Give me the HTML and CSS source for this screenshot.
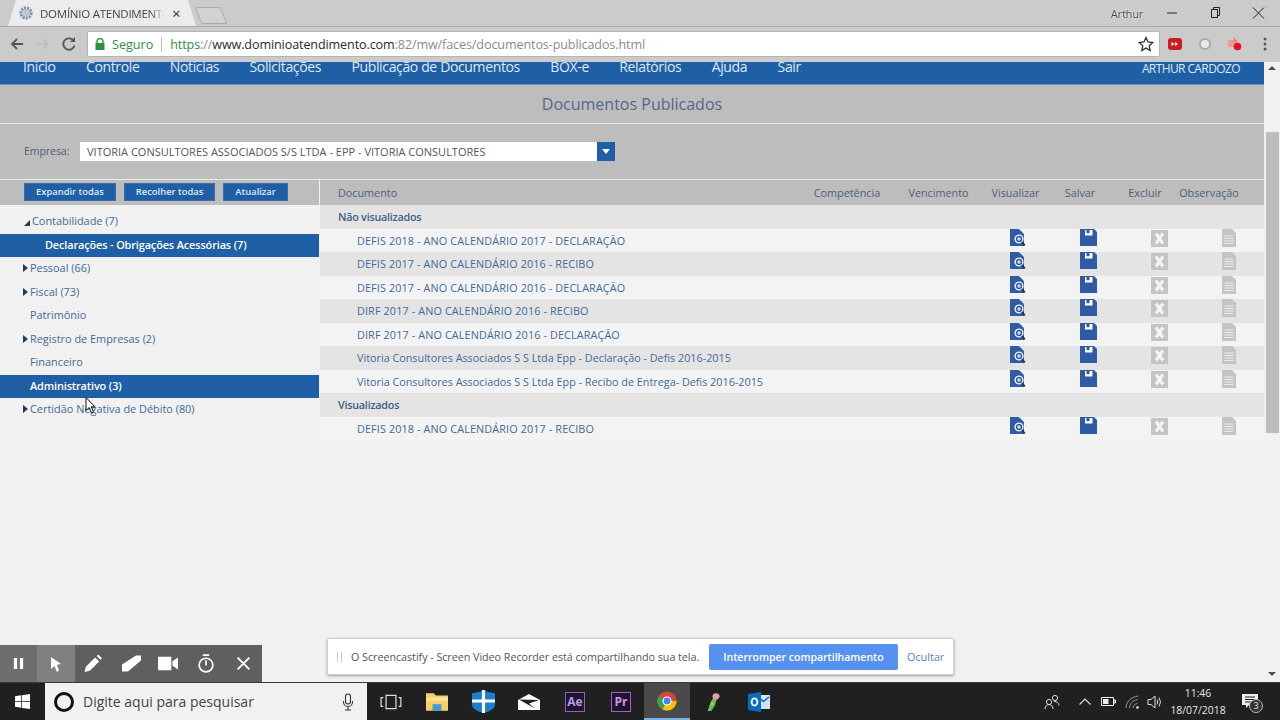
FILE: index.html
```html
<!DOCTYPE html>
<html lang="pt-BR">
<head>
<meta charset="utf-8">
<title>Documentos Publicados</title>
<link rel="stylesheet" href="styles.css">
</head>
<body>
<svg class="defs" width="0" height="0">
  <symbol id="i-view" viewBox="0 0 16 18"><path d="M0 0h8q1 0 2 1l3 3q1 1 1 2v11H0z" fill="#2f5aa4"/><circle cx="9" cy="10" r="4.600" fill="#eef1f6"/><circle cx="9" cy="10" r="3.200" fill="#2f5aa4"/><circle cx="9" cy="10" r="1.700" fill="#d7dfee"/><path d="M12 13l2.800 3.500" stroke="#23344f" stroke-width="2"/></symbol>
  <symbol id="i-save" viewBox="0 0 17 17"><path d="M0 0h14l3 3v14H0z" fill="#2f5aa4"/><path d="M5 1h7.500v5.500H5z" fill="#fff"/><path d="M6.500 1h3v3.200h-3z" fill="#2f5aa4"/></symbol>
  <symbol id="i-del" viewBox="0 0 17 17"><path d="M0 0h17v17H0z" fill="#c4c4c4"/><path d="M5 3.500l7 10M12 3.500l-7 10" stroke="#f4f4f4" stroke-width="3.200"/></symbol>
  <symbol id="i-obs" viewBox="0 0 14 18"><path d="M0 0h10l4 4v14H0z" fill="#c4c4c4"/><path d="M2.500 7h9M2.500 9.500h9M2.500 12h9M2.500 14.500h9" stroke="#eee" stroke-width="1"/></symbol>
</svg>

<header class="chrome">
  <div class="tabstrip">
    <div class="tab">
      <svg class="favicon" viewBox="0 0 14 14"><circle cx="7" cy="7" r="5" fill="none" stroke="#7d94a8" stroke-width="3.400" stroke-dasharray="2 1"/><circle cx="7" cy="7" r="3.600" fill="#b9c9d6"/></svg>
      <span class="tab-title">DOMÍNIO ATENDIMENTO</span>
      <span class="tab-x">×</span>
    </div>
    <div class="newtab"></div>
    <div class="win">
      <span class="win-user">Arthur</span>
      <svg class="win-ic" viewBox="0 0 46 14"><path d="M25 7h10" stroke="#222" fill="none"/></svg>
      <svg class="win-ic" viewBox="0 0 46 14"><path d="M23.500 3.500h6v8h-6zM25.500 3.500v-2h6v8h-2" stroke="#222" fill="none"/></svg>
      <svg class="win-ic" viewBox="0 0 46 14"><path d="M19 1.500l11 11M30 1.500l-11 11" stroke="#222" fill="none"/></svg>
    </div>
  </div>
  <div class="toolbar">
    <svg class="nav-ic" viewBox="0 0 16 16"><path d="M14 8H3M8 3L3 8l5 5" fill="none" stroke="#555" stroke-width="1.800"/></svg>
    <svg class="nav-ic" viewBox="0 0 16 16"><path d="M2 8h11M8 3l5 5-5 5" fill="none" stroke="#bcbcbc" stroke-width="1.600"/></svg>
    <svg class="nav-ic" viewBox="0 0 16 16"><path d="M13.500 9.500A5.700 5.700 0 1 1 12 4" fill="none" stroke="#555" stroke-width="1.800"/><path d="M14 1v5H9z" fill="#555"/></svg>
    <div class="omnibox">
      <svg class="lock" viewBox="0 0 10 12"><path d="M2 5V3.500a3 3 0 0 1 6 0V5" fill="none" stroke="#2f8f3e" stroke-width="1.400"/><path d="M0.500 5h9v7h-9z" fill="#2f8f3e"/></svg>
      <span class="secure">Seguro</span>
      <span class="omni-sep"></span>
      <span class="url"><span class="url-https">https</span>://<b class="url-host">www.dominioatendimento.com</b>:82/mw/faces/documentos-publicados.html</span>
      <svg class="star" viewBox="0 0 16 16"><path d="M8 1.500l2 4.500 4.800.5-3.600 3.200 1 4.800L8 12.100l-4.200 2.400 1-4.800L1.200 6.500 6 6z" fill="none" stroke="#333" stroke-width="1.300"/></svg>
    </div>
    <div class="exts">
      <svg class="ext" viewBox="0 0 16 16"><rect x="1" y="2" width="14" height="12" rx="3" fill="#c8201f"/><path d="M4.500 6l3 2-3 2zM8 6l3 2-3 2z" fill="#fff"/></svg>
      <svg class="ext" viewBox="0 0 16 16"><circle cx="8" cy="8" r="5" fill="#e8e8e8" stroke="#a9a9a9" stroke-width="1.800"/></svg>
      <svg class="ext" viewBox="0 0 16 16"><path d="M1 4h6v7H1z" fill="#ee9a9a"/><path d="M6 1l5 4-4 3z" fill="#ee8888"/><circle cx="10.500" cy="10.500" r="3.800" fill="#e8101c"/></svg>
      <svg class="ext dots" viewBox="0 0 4 16"><circle cx="2" cy="3" r="1.500" fill="#555"/><circle cx="2" cy="8" r="1.500" fill="#555"/><circle cx="2" cy="13" r="1.500" fill="#555"/></svg>
    </div>
  </div>
</header>

<div class="viewport">
  <main class="page">
    <nav class="topnav">
      <a>Início</a><a>Controle</a><a>Notícias</a><a>Solicitações</a><a>Publicação de Documentos</a><a>BOX-e</a><a>Relatórios</a><a>Ajuda</a><a>Sair</a>
      <span class="user">ARTHUR CARDOZO</span>
    </nav>
    <h1 class="title">Documentos Publicados</h1>
    <div class="company">
      <label class="company-label">Empresa:</label>
      <div class="select">
        <span class="select-text">VITORIA CONSULTORES ASSOCIADOS S/S LTDA - EPP - VITORIA CONSULTORES</span>
        <span class="select-btn"></span>
      </div>
    </div>
    <div class="split">
      <aside class="side">
        <div class="side-tools">
          <button class="btn">Expandir todas</button>
          <button class="btn">Recolher todas</button>
          <button class="btn">Atualizar</button>
        </div>
        <ul class="tree">
          <li class="node"><span class="tri tri-open"></span>Contabilidade (7)</li>
          <li class="node sel sub">Declarações - Obrigações Acessórias (7)</li>
          <li class="node"><span class="tri"></span>Pessoal (66)</li>
          <li class="node"><span class="tri"></span>Fiscal (73)</li>
          <li class="node plain">Patrimônio</li>
          <li class="node"><span class="tri"></span>Registro de Empresas (2)</li>
          <li class="node plain">Financeiro</li>
          <li class="node sel"><span class="tri"></span>Administrativo (3)</li>
          <li class="node"><span class="tri"></span>Certidão Negativa de Débito (80)</li>
        </ul>
      </aside>
      <section class="docs">
        <div class="docs-head">
          <span class="h-doc">Documento</span>
          <span>Competência</span><span>Vencimento</span><span>Visualizar</span><span>Salvar</span><span>Excluir</span><span>Observação</span>
        </div>
        <div class="group">Não visualizados</div>
        <div class="row"><span class="name caps">DEFIS 2018 - ANO CALENDÁRIO 2017 - DECLARAÇÃO</span><svg class="a-view"><use href="#i-view"/></svg><svg class="a-save"><use href="#i-save"/></svg><svg class="a-del"><use href="#i-del"/></svg><svg class="a-obs"><use href="#i-obs"/></svg></div>
        <div class="row"><span class="name caps">DEFIS 2017 - ANO CALENDÁRIO 2016 - RECIBO</span><svg class="a-view"><use href="#i-view"/></svg><svg class="a-save"><use href="#i-save"/></svg><svg class="a-del"><use href="#i-del"/></svg><svg class="a-obs"><use href="#i-obs"/></svg></div>
        <div class="row"><span class="name caps">DEFIS 2017 - ANO CALENDÁRIO 2016 - DECLARAÇÃO</span><svg class="a-view"><use href="#i-view"/></svg><svg class="a-save"><use href="#i-save"/></svg><svg class="a-del"><use href="#i-del"/></svg><svg class="a-obs"><use href="#i-obs"/></svg></div>
        <div class="row"><span class="name caps">DIRF 2017 - ANO CALENDÁRIO 2016 - RECIBO</span><svg class="a-view"><use href="#i-view"/></svg><svg class="a-save"><use href="#i-save"/></svg><svg class="a-del"><use href="#i-del"/></svg><svg class="a-obs"><use href="#i-obs"/></svg></div>
        <div class="row"><span class="name caps">DIRF 2017 - ANO CALENDÁRIO 2016 - DECLARAÇÃO</span><svg class="a-view"><use href="#i-view"/></svg><svg class="a-save"><use href="#i-save"/></svg><svg class="a-del"><use href="#i-del"/></svg><svg class="a-obs"><use href="#i-obs"/></svg></div>
        <div class="row"><span class="name">Vitoria Consultores Associados S S Ltda Epp - Declaração - Defis 2016-2015</span><svg class="a-view"><use href="#i-view"/></svg><svg class="a-save"><use href="#i-save"/></svg><svg class="a-del"><use href="#i-del"/></svg><svg class="a-obs"><use href="#i-obs"/></svg></div>
        <div class="row"><span class="name">Vitoria Consultores Associados S S Ltda Epp - Recibo de Entrega- Defis 2016-2015</span><svg class="a-view"><use href="#i-view"/></svg><svg class="a-save"><use href="#i-save"/></svg><svg class="a-del"><use href="#i-del"/></svg><svg class="a-obs"><use href="#i-obs"/></svg></div>
        <div class="group">Visualizados</div>
        <div class="row"><span class="name caps">DEFIS 2018 - ANO CALENDÁRIO 2017 - RECIBO</span><svg class="a-view"><use href="#i-view"/></svg><svg class="a-save"><use href="#i-save"/></svg><svg class="a-del"><use href="#i-del"/></svg><svg class="a-obs"><use href="#i-obs"/></svg></div>
      </section>
    </div>
    <svg class="cursor" viewBox="0 0 12 18"><path d="M1 1v13l3.200-3 2.300 5.500 2-.9-2.300-5.300H10z" fill="#fff" stroke="#111" stroke-width="1"/></svg>
  </main>
  <div class="scrollbar">
    <span class="sb-up"></span>
    <span class="sb-thumb"></span>
    <span class="sb-down"></span>
  </div>

  <div class="recorder">
    <span class="rec-btn rec-pause"><svg viewBox="0 0 14 14"><path d="M2 1h3.500v12H2zM8.500 1H12v12H8.500z" fill="#fff"/></svg></span>
    <span class="rec-btn rec-cursor"><svg viewBox="0 0 14 16"><path d="M2 1l10 7-4 .8 2 6-2.300.9L5.500 10 2 13z" fill="#fff"/></svg></span>
    <span class="rec-btn"><svg viewBox="0 0 18 18"><path d="M1 17l1.200-5L11 3.200l3.800 3.800L6 15.800z" fill="#fff"/><path d="M12.500 2l1.500-1.500 3.500 3.500-1.500 1.500z" fill="#fff"/></svg></span>
    <span class="rec-btn"><svg viewBox="0 0 20 16"><path d="M1 9L15 0h5v5L7 16H1z" fill="#fff"/></svg></span>
    <span class="rec-btn"><svg viewBox="0 0 18 12"><path d="M0 0h12v12H0zM13 4l5-3.500v11L13 8z" fill="#fff"/></svg></span>
    <span class="rec-btn"><svg viewBox="0 0 18 18"><circle cx="9" cy="10.500" r="6.500" fill="none" stroke="#fff" stroke-width="1.600"/><path d="M6 1h6M9 6v5" stroke="#fff" stroke-width="1.600"/></svg></span>
    <span class="rec-btn rec-close"><svg viewBox="0 0 14 14"><path d="M1.500 1.500l11 11M12.500 1.500l-11 11" stroke="#fff" stroke-width="1.800"/></svg></span>
  </div>

  <div class="infobar">
    <span class="grip"></span>
    <span class="info-text">O Screencastify - Screen Video Recorder está compartilhando sua tela.</span>
    <button class="stop">Interromper compartilhamento</button>
    <span class="hide">Ocultar</span>
  </div>
</div>

<footer class="taskbar">
  <span class="start"><svg viewBox="0 0 16 16"><path d="M0 2.300L6.700 1.300v6.300H0zM7.500 1.200L16 0v7.600H7.500zM0 8.400h6.700v6.300L0 13.700zM7.500 8.400H16V16l-8.500-1.200z" fill="#fff"/></svg></span>
  <div class="search">
    <span class="cortana"></span>
    <span class="search-text">Digite aqui para pesquisar</span>
    <svg class="mic" viewBox="0 0 12 18"><rect x="3.500" y="1" width="5" height="10" rx="2.500" fill="none" stroke="#333" stroke-width="1.100"/><path d="M1.500 8v1a4.500 4.500 0 0 0 9 0V8M6 13.500V17M3 17h6" fill="none" stroke="#333" stroke-width="1.100"/></svg>
  </div>
  <div class="apps">
    <span class="app"><svg viewBox="0 0 20 14"><path d="M5.500 1h9v12h-9zM3 3H1v8h2M17 3h2v8h-2" fill="none" stroke="#ddd" stroke-width="1.100"/></svg></span>
    <span class="app"><svg viewBox="0 0 20 18"><path d="M0 1h7l2 2h11v14H0z" fill="#f6cf65"/><path d="M0 5h20v3H0z" fill="#fbe49b"/><path d="M6 11h8v6H6z" fill="#3f9ed8"/></svg></span>
    <span class="app app-lg"><svg viewBox="0 0 22 22"><path d="M0 3q6 0 11-3 5 3 11 3v11q0 5-11 8Q0 19 0 14z" fill="#1b7fd0"/><path d="M9.500 0h3v22h-3zM0 9h22v3H0z" fill="#fff"/></svg></span>
    <span class="app"><svg viewBox="0 0 22 16"><path d="M0 6L11 0l11 6v10H0z" fill="#fff"/><path d="M1 5.500L21 6 11 9.500l6 5-9-5z" fill="#1e1e1e"/></svg></span>
    <span class="app"><span class="adobe adobe-ae">Ae</span></span>
    <span class="app"><span class="adobe adobe-pr">Pr</span></span>
    <span class="app app-active"><svg viewBox="0 0 22 22"><circle cx="11" cy="11" r="10.500" fill="#d9473a"/><path d="M11 11L1.900 5.800A10.500 10.500 0 0 0 6 20.300z" fill="#3aa452"/><path d="M11 11l-5 9.300A10.500 10.500 0 0 0 21.500 11z" fill="#f4c20d"/><circle cx="11" cy="11" r="5" fill="#fff"/><circle cx="11" cy="11" r="3.800" fill="#4285f4"/></svg></span>
    <span class="app"><svg viewBox="0 0 18 22"><path d="M3 21l3-9 4-7 5-3 2 3-4 3-2 7-4 6z" fill="#5fbf5a"/><circle cx="12" cy="5" r="3.500" fill="#e8a0a8"/><path d="M7 10l3 3-3 3z" fill="#d8c04a"/></svg></span>
    <span class="app"><svg viewBox="0 0 22 20"><path d="M9 3h13v14H9z" fill="#cde6f7"/><path d="M10 5l5.500 4.500L21 5" fill="none" stroke="#0a6cbf" stroke-width="1.500"/><path d="M0 2l13-2v20L0 18z" fill="#0a6cbf"/><ellipse cx="6.500" cy="10" rx="2.900" ry="3.600" fill="none" stroke="#fff" stroke-width="1.800"/></svg></span>
  </div>
  <div class="tray">
    <svg class="t-people" viewBox="0 0 16 16"><circle cx="11" cy="4" r="2.600" fill="none" stroke="#ddd"/><circle cx="5" cy="8" r="2.600" fill="none" stroke="#ddd"/><path d="M1 15c0-6 8-6 8 0M10 7.500c3 0 5 1.500 5 4" fill="none" stroke="#ddd"/></svg>
    <svg class="t-chev" viewBox="0 0 12 7"><path d="M.5 6.500L6 1l5.500 5.500" fill="none" stroke="#ddd" stroke-width="1.200"/></svg>
    <svg class="t-bat" viewBox="0 0 15 9"><path d="M.5.5h12v8H.5zM13 3h1.500v3H13z" fill="none" stroke="#eee"/><path d="M2 2h5.500v5H2z" fill="#eee"/></svg>
    <svg class="t-wifi" viewBox="0 0 15 14"><path d="M1 13C1 7 6 2 13 1M4.500 13c0-4 3-7.500 8-8.500M8 13c0-2 1.500-4 4.500-4.500" fill="none" stroke="#999"/><circle cx="12.500" cy="12.500" r="1.300" fill="#eee"/></svg>
    <svg class="t-vol" viewBox="0 0 16 14"><path d="M1 4.500h3L8 1v12L4 9.500H1z" fill="none" stroke="#ddd"/><path d="M10 4.500q1.500 2.500 0 5M12 2.500q3 4.500 0 9" fill="none" stroke="#ddd"/></svg>
    <div class="clock"><span>11:46</span><span>18/07/2018</span></div>
    <span class="notif"><svg viewBox="0 0 16 15"><path d="M0 0h16v11H7l-3 3v-3H0z" fill="#eee"/><path d="M3 3h10M3 5.500h10M3 8h10" stroke="#1e1e1e"/></svg><span class="badge">3</span></span>
  </div>
</footer>
</body>
</html>
```

FILE: styles.css
```css
* { box-sizing: border-box; }
html, body { margin: 0; padding: 0; }
body {
  width: 1280px; height: 720px; overflow: hidden;
  display: flex; flex-direction: column;
  font-family: "Open Sans", "Noto Sans", sans-serif;
  background: #f1f1f1;
}
.defs { display: block; height: 0; }

/* browser chrome */
.chrome { flex: none; height: 62px; background: #cbcbcb; }
.tabstrip { height: 27px; display: flex; align-items: flex-end; border-bottom: 1px solid #a9a9a9; position: relative; }
.tab {
  width: 188px; height: 26px; margin-left: 8px; flex: none;
  background: #ececec;
  clip-path: polygon(0 100%, 8px 0, calc(100% - 8px) 0, 100% 100%);
  display: flex; align-items: center; padding-left: 11px; font-size: 11.5px; color: #444;
}
.favicon { width: 14px; height: 14px; flex: none; margin-right: 7px; }
.tab-title {
  width: 125px; overflow: hidden; white-space: nowrap; letter-spacing: -.25px; flex: none;
  -webkit-mask-image: linear-gradient(90deg, #000 88%, transparent);
  mask-image: linear-gradient(90deg, #000 88%, transparent);
}
.tab-x { font-size: 15px; color: #333; margin-left: 7px; }
.newtab { width: 26px; height: 17px; margin: 0 0 2px 2px; border: 1px solid #aaa; border-radius: 2px; background: #d2d2d2; transform: skewX(22deg); flex: none; }
.win { margin-left: auto; align-self: flex-start; height: 26px; display: flex; align-items: center; }
.win-user { font-size: 11px; color: #444; margin-right: -1px; letter-spacing: -.2px; text-shadow: 0 0 2px #fff, 0 0 1px #fff; }
.win-ic { width: 46px; height: 14px; display: block; }

.toolbar { height: 35px; display: flex; align-items: center; padding: 0 0 1px 9px; }
.nav-ic { width: 16px; height: 16px; margin-right: 10px; flex: none; }
.omnibox {
  width: 1073px; height: 26px;
  background: #fff; border: 1px solid #b4b4b4; border-radius: 2px;
  display: flex; align-items: center; padding: 0 5px 0 7px; font-size: 12.6px; flex: none;
}
.lock { width: 10px; height: 12px; flex: none; margin-right: 7px; }
.secure { color: #2f8f3e; }
.omni-sep { width: 1px; height: 15px; background: #bbb; margin: 0 8px; }
.url { color: #8b8b8b; white-space: nowrap; flex: 1; letter-spacing: -.12px; }
.url-https { color: #2f8f3e; }
.url-host { color: #2a2a2a; font-weight: 400; }
.star { width: 16px; height: 16px; flex: none; }
.exts { display: flex; align-items: center; margin-left: 7px; }
.ext { width: 16px; height: 16px; margin-right: 14px; flex: none; }
.dots { width: 4px; margin: 0 0 0 6px; }

/* page */
.viewport { flex: 1; min-height: 0; display: flex; position: relative; }
.page { flex: 1; min-width: 0; position: relative; overflow: hidden; background: #f1f1f1; }
.topnav {
  height: 23px; background: #1f5fa5; color: #dfe9f5; display: flex; align-items: flex-start;
  padding-left: 23px; font-size: 14px; line-height: 10px; border-bottom: 1px solid #6f93bd; overflow: hidden;
}
.topnav a { margin-right: 30.400px; white-space: nowrap; letter-spacing: -.36px; }
.user { margin-left: auto; margin-right: 24px; font-size: 12px; line-height: 13px; letter-spacing: -.6px; }
.title {
  margin: 0; height: 39px; background: #bdbdbd; border-bottom: 1px solid #e9e9e9;
  font-size: 16px; font-weight: 400; color: #54688a; text-align: center; line-height: 38px;
}
.company { height: 56px; background: #bdbdbd; border-bottom: 1px solid #e9e9e9; display: flex; align-items: flex-start; padding: 18px 0 0 24px; }
.company-label { width: 56px; font-size: 10.5px; line-height: 18px; color: #4c5f76; letter-spacing: -.05px; }
.select { width: 535px; height: 19px; background: #fff; display: flex; font-size: 11px; color: #555; }
.select-text { flex: 1; padding-left: 7px; line-height: 19px; white-space: nowrap; }
.select-btn { width: 18px; background: #1f5fa5; position: relative; }
.select-btn::after { content: ""; position: absolute; left: 5px; top: 7px; border: 4px solid transparent; border-top: 5px solid #fff; border-bottom: 0; }

.split { display: flex; }
.side { width: 319px; flex: none; }
.side-tools { height: 25px; background: #bdbdbd; display: flex; align-items: flex-start; gap: 8px; padding: 3px 0 0 24px; }
.btn {
  height: 18px; padding: 0 11px; border: 1px solid #3a6ea8; background: #1f5fa5; color: #dfe9f5;
  font: 600 9.400px/16px "Open Sans", sans-serif; white-space: nowrap;
}
.tree { list-style: none; margin: 5px 0 0; padding: 0; }
.node { height: 23.500px; line-height: 21.500px; padding-left: 30px; font-size: 10.900px; color: #3f6a96; white-space: nowrap; position: relative; }
.node.sel { background: #1f5fa5; color: #fff; font-weight: 600; letter-spacing: -.12px; line-height: 22.500px; }
.node.sub { padding-left: 45px; }
.tri { position: absolute; left: 23px; top: 7px; border-left: 5px solid #1e3a5c; border-top: 4px solid transparent; border-bottom: 4px solid transparent; }
.sel .tri { border-left-color: #2e5a8e; }
.tri-open { left: 24px; top: 10px; border: 0; border-bottom: 6px solid #1e3a5c; border-left: 6px solid transparent; }
.node:first-child { padding-left: 32px; }

.docs { margin-left: 1px; flex: 1; min-width: 0; }
.docs-head {
  height: 25px; background: #bdbdbd; display: grid;
  grid-template-columns: 480px 94px 89px 65px 64px 66px 62px; padding-right: 24px;
  font-size: 10.800px; color: #4c5f76; line-height: 26px; text-align: center; white-space: nowrap;
}
.h-doc { text-align: left; padding-left: 18px; }
.group { height: 23.500px; background: #e4e4e4; padding-left: 18px; font-size: 10.800px; font-weight: 600; color: #3f5f80; line-height: 24px; letter-spacing: -.25px; }
.row {
  height: 23.500px; display: grid; grid-template-columns: 1fr 70px 71px 70px 70px; justify-items: center; align-items: start;
  background: #f3f3f3; font-size: 10.800px; color: #3f6a96;
}
.row:nth-of-type(even) { background: #e4e4e4; }
.name { justify-self: start; padding-left: 37px; line-height: 23px; white-space: nowrap; }
.caps { letter-spacing: .13px; }
.a-view { width: 16px; height: 18px; }
.a-save { width: 17px; height: 17px; }
.a-del { width: 17px; height: 17px; margin-top: 1px; }
.a-obs { width: 14px; height: 18px; }
.cursor { position: absolute; left: 85px; top: 334px; width: 12px; height: 19px; }

/* scrollbar */
.scrollbar { width: 16px; flex: none; background: #f1f1f1; display: flex; flex-direction: column; align-items: center; position: relative; padding: 70px 0 0; }
.sb-thumb { width: 13px; height: 301px; background: #bdbdbd; margin-left: 1px; }
.sb-up { position: absolute; top: 4px; border: 4px solid transparent; border-bottom: 4px solid #505050; border-top: 0; }
.sb-down { position: absolute; bottom: 6px; border: 4px solid transparent; border-top: 4px solid #505050; border-bottom: 0; }

/* overlays */
.recorder { position: absolute; left: 0; top: 583px; width: 262px; height: 37px; background: #5f5f5f; display: flex; }
.rec-btn { width: 37.400px; height: 37px; display: flex; align-items: center; justify-content: center; }
.rec-btn svg { width: 20px; height: 19px; }
.rec-pause { background: #6e6e6e; }
.rec-pause svg { width: 13px; height: 13px; }
.rec-cursor { background: #808080; }
.rec-cursor svg { width: 14px; height: 16px; }
.rec-close svg { width: 15px; height: 15px; }
.infobar {
  position: absolute; left: 327px; top: 576px; width: 627px; height: 37px;
  background: #fff; border: 1px solid #d0d0d0; border-radius: 2px; box-shadow: 0 1px 3px rgba(0,0,0,.35);
  display: flex; align-items: center; padding-left: 9px; font-size: 10.800px; color: #555;
}
.grip { width: 5px; height: 10px; border-left: 1.500px solid #c8c8c8; border-right: 1.500px solid #c8c8c8; margin-right: 9px; flex: none; }
.info-text { white-space: nowrap; width: 358px; flex: none; letter-spacing: -.06px; }
.stop { height: 26px; width: 189px; border: 0; border-radius: 2px; background: #5691f0; color: #fff; font: 600 10.500px "Open Sans", sans-serif; flex: none; }
.hide { color: #5b80b8; margin-left: 9px; }

/* taskbar */
.taskbar { flex: none; height: 38px; background: #202020; display: flex; align-items: center; border-top: 1px solid #3a3a3a; }
.start { width: 45px; height: 37px; display: flex; align-items: center; justify-content: center; }
.start svg { width: 15px; height: 15px; }
.search { width: 322px; height: 37px; background: #f1f1f1; display: flex; align-items: center; padding-left: 9px; font-size: 14px; color: #444; }
.cortana { width: 20px; height: 20px; border: 3px solid #111; border-radius: 50%; flex: none; }
.search-text { margin-left: 9px; flex: 1; }
.mic { width: 12px; height: 18px; margin-right: 13px; }
.apps { display: flex; height: 37px; margin-left: 1px; }
.app { width: 46px; height: 37px; display: flex; align-items: center; justify-content: center; }
.app svg { width: 22px; height: 20px; }
.app-lg svg { width: 23px; height: 23px; }
.app-active { background: #4a4a4a; border-bottom: 2px solid #7db4e6; }
.adobe { width: 20px; height: 20px; font-size: 12px; font-weight: 700; line-height: 17px; text-align: center; background: #201330; display: block; }
.adobe-ae { border: 1.500px solid #8d5fc0; color: #b99ae0; }
.adobe-pr { border: 1.500px solid #a060c8; color: #c79ae0; }
.tray { margin-left: auto; display: flex; align-items: center; color: #e6e6e6; height: 37px; }
.t-people { width: 16px; height: 16px; margin-right: 19px; }
.t-chev { width: 12px; height: 7px; margin-right: 10px; }
.t-bat { width: 15px; height: 9px; margin-right: 9px; }
.t-wifi { width: 15px; height: 14px; margin-right: 7px; }
.t-vol { width: 16px; height: 14px; margin-right: 8px; }
.clock { display: flex; flex-direction: column; align-items: center; font-size: 10.400px; line-height: 17px; width: 54px; margin-right: 17px; }
.notif { position: relative; width: 16px; height: 15px; margin-right: 22px; }
.notif svg { width: 16px; height: 15px; display: block; }
.badge { position: absolute; left: 7px; top: 5px; width: 14px; height: 14px; border-radius: 50%; background: #333; border: 1px solid #bbb; font-size: 9px; line-height: 12px; text-align: center; }
```
